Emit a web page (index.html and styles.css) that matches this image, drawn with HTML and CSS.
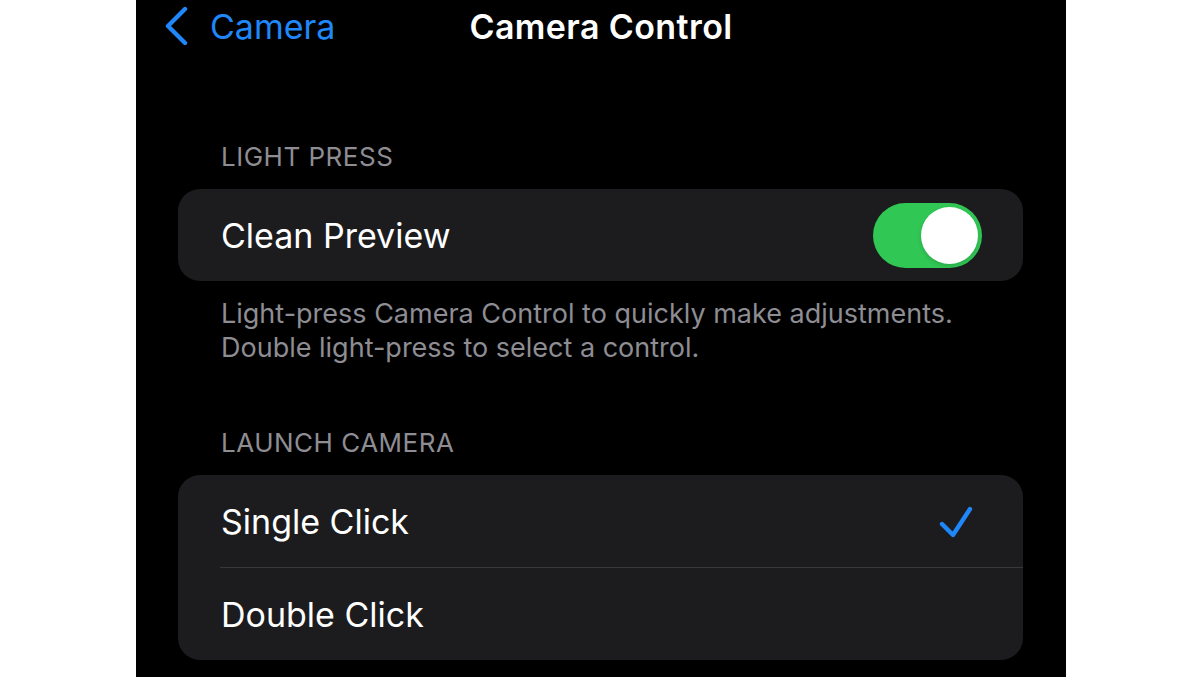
FILE: index.html
```html
<!DOCTYPE html>
<html>
<head>
  <meta charset="UTF-8">
  <title>Camera Control</title>
  <meta name="viewport" content="width=device-width, initial-scale=1.0">
  <link rel="stylesheet" href="styles.css">
</head>
<body>

<div class="screen">
  <div class="navbar">
    <a class="back" href="#">
      <svg class="chevron" width="26" height="40" viewBox="0 0 26 40">
        <polyline points="21,3 4,20 21,37" fill="none" stroke="currentColor" stroke-width="4.4" stroke-linecap="round" stroke-linejoin="round"/>
      </svg>
      <span>Camera</span>
    </a>
    <h1 class="title">Camera Control</h1>
    <div></div>
  </div>

  <div class="content">
    <div class="group-header light">LIGHT PRESS</div>
    <div class="card">
      <div class="row">
        <span class="label">Clean Preview</span>
        <span class="toggle on"><span class="knob"></span></span>
      </div>
    </div>
    <div class="group-footer">
      Light-press Camera Control to quickly make adjustments.<br>
      Double light-press to select a control.
    </div>

    <div class="group-header launch">LAUNCH CAMERA</div>
    <div class="card">
      <div class="row">
        <span class="label">Single Click</span>
        <svg class="check" width="34" height="33" viewBox="0 0 34 33">
          <polyline points="3,19 14,30 31,4" fill="none" stroke="currentColor" stroke-width="4.4" stroke-linecap="round" stroke-linejoin="round"/>
        </svg>
      </div>
      <div class="row">
        <span class="label">Double Click</span>
      </div>
    </div>
  </div>
</div>

</body>
</html>
```

FILE: styles.css
```css
body {
  margin: 0;
  background: #fff;
  font-family: Inter, "Noto Sans", sans-serif;
}
.screen {
  width: 930px;
  height: 677px;
  margin-left: 136px;
  background: #000;
  color: #fff;
  overflow: hidden;
}

/* top navigation */
.navbar {
  height: 52px;
  display: grid;
  grid-template-columns: 1fr auto 1fr;
  align-items: center;
}
.back {
  display: flex;
  align-items: center;
  gap: 20px;
  padding-left: 28px;
  color: #1f87f8;
  text-decoration: none;
  font-size: 34px;
}
.chevron { display: block; }
.title {
  margin: 0;
  font-size: 34px;
  font-weight: 600;
  letter-spacing: 0.4px;
}

/* grouped list */
.content { padding: 0 43px 0 42px; }
.group-header {
  padding-left: 43px;
  font-size: 26px;
  line-height: 32px;
  color: #8d8d93;
  letter-spacing: 0.5px;
}
.group-header.light { margin-top: 89px; margin-bottom: 16px; }
.group-header.launch { margin-top: 62px; margin-bottom: 16px; }

.card {
  background: #1c1c1e;
  border-radius: 22px;
  overflow: hidden;
}
.row {
  height: 92px;
  display: flex;
  align-items: center;
  justify-content: space-between;
  padding: 0 41px 0 43px;
  position: relative;
}
.row + .row { margin-top: 1px; }
.row + .row::before {
  content: "";
  position: absolute;
  left: 42px;
  right: 0;
  top: -1px;
  height: 1px;
  background: #38383a;
}
.label { font-size: 34px; }

.group-footer {
  padding: 16px 0 0 43px;
  font-size: 27px;
  line-height: 34px;
  color: #8d8d93;
}

/* switch */
.toggle {
  width: 109px;
  height: 65px;
  border-radius: 33px;
  background: #3a3a3c;
  display: flex;
  align-items: center;
  padding: 0 4px;
  box-sizing: border-box;
}
.toggle.on {
  background: #31c755;
  justify-content: flex-end;
}
.knob {
  width: 57px;
  height: 57px;
  border-radius: 50%;
  background: #fff;
  box-shadow: 0 2px 4px rgba(0,0,0,0.15);
}

.check {
  color: #1f87f8;
  margin-right: 9px;
}
```
